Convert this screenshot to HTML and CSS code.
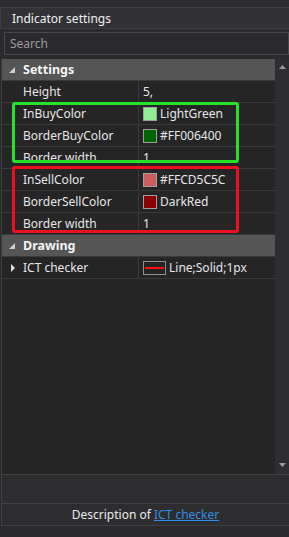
FILE: index.html
```html
<!DOCTYPE html>
<html>
<head>
<meta charset="utf-8">
<link rel="stylesheet" href="styles.css">
</head>
<body>
<div class="panel">
  <div class="topstrip"></div>
  <div class="title">Indicator settings</div>
  <div class="search">Search</div>
  <div class="gridwrap">
    <div class="grid">
      <div class="cat"><svg class="exp" width="6" height="6" viewBox="0 0 6 6"><polygon points="6,0 6,6 0,6" fill="#d0d0d0"/></svg>Settings</div>
      <div class="row"><div class="name">Height</div><div class="val">5,</div></div>
      <div class="row"><div class="name">InBuyColor</div><div class="val"><span class="sw sw-lg"></span>LightGreen</div></div>
      <div class="row"><div class="name">BorderBuyColor</div><div class="val"><span class="sw sw-dg"></span>#FF006400</div></div>
      <div class="row"><div class="name">Border width</div><div class="val">1</div></div>
      <div class="row"><div class="name">InSellColor</div><div class="val"><span class="sw sw-ir"></span>#FFCD5C5C</div></div>
      <div class="row"><div class="name">BorderSellColor</div><div class="val"><span class="sw sw-dr"></span>DarkRed</div></div>
      <div class="row"><div class="name">Border width</div><div class="val">1</div></div>
      <div class="cat"><svg class="exp" width="6" height="6" viewBox="0 0 6 6"><polygon points="6,0 6,6 0,6" fill="#d0d0d0"/></svg>Drawing</div>
      <div class="row"><div class="name"><svg class="coll" width="4" height="8" viewBox="0 0 4 8"><polygon points="0,0 4,4 0,8" fill="#e0e0e0"/></svg>ICT checker</div><div class="val"><span class="linesw"><span class="redline"></span></span>Line;Solid;1px</div></div>
      <div class="hl hl-green"></div>
      <div class="hl hl-red"></div>
    </div>
    <div class="scroll">
      <svg width="7" height="4" viewBox="0 0 7 4"><polygon points="0,4 3.5,0 7,4" fill="#9a9a9a"/></svg>
      <svg width="7" height="4" viewBox="0 0 7 4"><polygon points="0,0 3.5,4 7,0" fill="#9a9a9a"/></svg>
    </div>
  </div>
  <div class="helparea"></div>
  <div class="desc">Description of <a href="#">ICT checker</a></div>
</div>
</body>
</html>
```

FILE: styles.css
```css
html, body {
  margin: 0;
  padding: 0;
  background: #2b2b2d;
  font-family: "Noto Sans", "Open Sans", sans-serif;
  font-size: 12px;
  color: #e6e6e6;
}
.panel {
  width: 289px;
  height: 537px;
  display: flex;
  flex-direction: column;
  overflow: hidden;
}
.topstrip {
  height: 7px;
  background: #2d2d30;
}
.title {
  height: 20px;
  line-height: 21px;
  padding-left: 11px;
  background: #323236;
  border-top: 1px solid #3d3d42;
  border-bottom: 1px solid #3d3d42;
  border-left: 1px solid #3d3d42;
  color: #f0f0f0;
}
.search {
  margin: 3px 0 4px 4px;
  height: 21px;
  line-height: 21px;
  padding-left: 5px;
  border: 1px solid #46464b;
  background: #2b2b2e;
  color: #9a9a9e;
}
.gridwrap {
  display: flex;
  height: 415px;
  border-left: 1px solid #3d3d42;
  border-bottom: 1px solid #3f3f44;
  margin-left: 1px;
}
.grid {
  position: relative;
  width: 273px;
  background: #252526;
}
.scroll {
  width: 14px;
  background: #2e2e32;
  display: flex;
  flex-direction: column;
  justify-content: space-between;
  align-items: center;
  padding: 6px 0 7px 0;
}
.cat {
  height: 21px;
  line-height: 21px;
  border-bottom: 1px solid #3a3a3c;
  background: #555556;
  font-weight: bold;
  font-size: 12.5px;
  color: #f4f4f4;
  display: flex;
  align-items: center;
}
.exp {
  margin-left: 7px;
  margin-right: 8px;
}
.row {
  display: flex;
  height: 21px;
  border-bottom: 1px solid #3a3a3c;
}
.name {
  width: 115px;
  padding-left: 21px;
  border-right: 1px solid #3a3a3c;
  line-height: 22px;
  display: flex;
  align-items: center;
  position: relative;
}
.coll {
  position: absolute;
  left: 9px;
  top: 7px;
}
.val {
  flex: 1;
  padding-left: 4px;
  line-height: 22px;
  display: flex;
  align-items: center;
}
.sw {
  width: 12px;
  height: 12px;
  border: 1px solid #a0a0a0;
  margin-right: 3px;
  box-sizing: content-box;
}
.sw-lg { background: #90ee90; }
.sw-dg { background: #006400; }
.sw-ir { background: #cd5c5c; }
.sw-dr { background: #8b0000; }
.linesw {
  width: 21px;
  height: 12px;
  border: 1px solid #909090;
  margin-right: 3px;
  display: flex;
  align-items: center;
  justify-content: center;
}
.redline {
  width: 19px;
  height: 2px;
  background: #ff1010;
}
.hl {
  position: absolute;
  left: 10px;
  width: 221px;
  border-radius: 3px;
  border: 3px solid;
  pointer-events: none;
}
.hl-green {
  top: 43px;
  height: 55px;
  border-color: #26e226;
}
.hl-red {
  top: 107px;
  height: 61px;
  border-color: #ec1020;
}
.helparea {
  height: 28px;
  border-left: 1px solid #3d3d42;
  border-bottom: 1px solid #3f3f44;
  margin-left: 1px;
  background: #2d2d30;
}
.desc {
  height: 21px;
  line-height: 21px;
  text-align: center;
  border-left: 1px solid #3d3d42;
  border-bottom: 1px solid #3f3f44;
  margin-left: 1px;
  background: #2d2d30;
  color: #eaeaea;
}
.desc a {
  color: #2f8fe6;
  text-decoration: underline;
}
```
